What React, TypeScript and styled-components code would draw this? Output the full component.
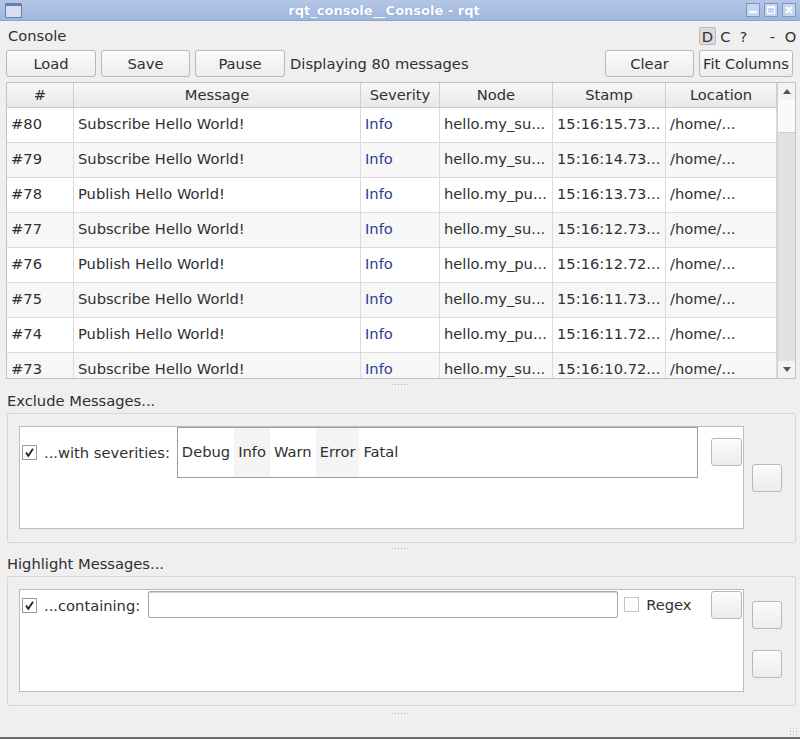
import styled, { createGlobalStyle } from "styled-components";

const GlobalStyle = createGlobalStyle`
  html, body {
    margin: 0;
    padding: 0;
    background: #efefef;
  }
  body {
    font-family: "DejaVu Sans", "Liberation Sans", sans-serif;
    font-size: 14.7px;
    color: #303030;
  }
`;

const Window = styled.div`
  width: 800px;
  height: 739px;
  display: flex;
  flex-direction: column;
  background: #efefef;
  border-bottom: 2px solid #6d6d6d;
  box-sizing: border-box;
  overflow: hidden;
`;

const TitleBar = styled.div`
  height: 20px;
  flex: none;
  display: flex;
  align-items: center;
  justify-content: space-between;
  padding: 0 4px 0 5px;
  background: linear-gradient(#b3c6e6, #9fb6dd);
  border-bottom: 1px solid #8ea3c8;
`;

const TitleText = styled.div`
  color: #ffffff;
  font-weight: bold;
  font-size: 13px;
  text-shadow: 0 0 1px #6f86b0;
`;

const WinIcon = styled.div`
  width: 15px;
  height: 11px;
  border: 1px solid #6a7fae;
  border-top-width: 3px;
  background: #d7def0;
  border-radius: 1px;
`;

const WinButtons = styled.div`
  display: flex;
  gap: 4px;
`;

const WinButton = styled.div`
  width: 14px;
  height: 14px;
  background: #c7d5ee;
  border: 1px solid #7f96c4;
  box-sizing: border-box;
  display: flex;
  align-items: center;
  justify-content: center;
`;

const Body = styled.div`
  flex: 1;
  display: flex;
  flex-direction: column;
  padding: 0 4px 0 6px;
`;

const PluginHeader = styled.div`
  height: 29px;
  display: flex;
  align-items: center;
  justify-content: space-between;
  padding-left: 2px;
`;

const PluginTools = styled.div`
  display: flex;
  align-items: center;
  margin-right: -4px;
`;

const ToolGlyph = styled.span<{ $boxed?: boolean; $wide?: number }>`
  display: inline-block;
  width: ${(p) => p.$wide ?? 17}px;
  height: 18px;
  line-height: 18px;
  text-align: center;
  box-sizing: border-box;
  border: 1px solid ${(p) => (p.$boxed ? "#b9b9b9" : "transparent")};
  background: ${(p) => (p.$boxed ? "#dcdcdc" : "transparent")};
  border-radius: 2px;
  margin-right: 1px;
`;

const ButtonRow = styled.div`
  height: 27px;
  display: flex;
  align-items: center;
  gap: 5px;
  padding-right: 3px;
`;

const Button = styled.button<{ $w?: number; $h?: number }>`
  width: ${(p) => p.$w ?? 90}px;
  height: ${(p) => p.$h ?? 27}px;
  flex: none;
  padding: 0;
  font-family: inherit;
  font-size: 14.7px;
  color: #303030;
  background: linear-gradient(#fbfbfb, #ececec);
  border: 1px solid #b8b8b8;
  border-radius: 3px;
  box-shadow: inset 0 1px 0 #ffffff;
`;

const Status = styled.span`
  flex: 1;
`;

const Table = styled.div`
  margin-top: 5px;
  height: 297px;
  border: 1px solid #c2c2c2;
  display: flex;
  background: #ffffff;
  overflow: hidden;
  box-sizing: border-box;
`;

const TableMain = styled.div`
  flex: 1;
  display: flex;
  flex-direction: column;
  overflow: hidden;
`;

const cols = "67px 287px 79px 113px 113px 1fr";

const HeaderRow = styled.div`
  display: grid;
  grid-template-columns: ${cols};
  height: 24px;
  flex: none;
  background: linear-gradient(#f7f7f7, #e9e9e9);
  border-bottom: 1px solid #c9c9c9;
`;

const HeaderCell = styled.div`
  display: flex;
  align-items: center;
  justify-content: center;
  padding-bottom: 1px;
  border-right: 1px solid #cfcfcf;
`;

const Row = styled.div<{ $alt: boolean }>`
  display: grid;
  grid-template-columns: ${cols};
  height: 35px;
  flex: none;
  background: ${(p) => (p.$alt ? "#f7f7f7" : "#ffffff")};
  border-bottom: 1px solid #dadada;
  box-sizing: border-box;
`;

const Cell = styled.div<{ $info?: boolean }>`
  display: flex;
  align-items: center;
  padding: 0 0 3px 4px;
  border-right: 1px solid #dadada;
  white-space: nowrap;
  overflow: hidden;
  color: ${(p) => (p.$info ? "#2c3d94" : "#303030")};
`;

const ScrollBar = styled.div`
  width: 17px;
  flex: none;
  display: flex;
  flex-direction: column;
  background: #e2e2e2;
  border-left: 1px solid #cfcfcf;
`;

const ScrollArrow = styled.div`
  height: 17px;
  flex: none;
  background: #f3f3f3;
  display: flex;
  align-items: center;
  justify-content: center;
`;

const ScrollThumb = styled.div`
  height: 32px;
  flex: none;
  background: #fafafa;
  border-bottom: 1px solid #cfcfcf;
`;

const ScrollTrack = styled.div`
  flex: 1;
`;

const Splitter = styled.div<{ $h: number }>`
  height: ${(p) => p.$h}px;
  flex: none;
  display: flex;
  justify-content: center;
  align-items: center;
`;

const Dots = styled.div`
  width: 18px;
  height: 1px;
  background-image: linear-gradient(90deg, #b5b5b5 50%, transparent 50%);
  background-size: 3px 1px;
`;

const SectionLabel = styled.div`
  height: 21px;
  display: flex;
  align-items: center;
  padding-left: 1px;
`;

const GroupBox = styled.div`
  margin-top: 2px;
  height: 130px;
  box-sizing: border-box;
  border: 1px solid #d6d6d6;
  border-radius: 2px;
  margin-left: 1px;
  display: flex;
  padding: 12px 14px 13px 11px;
  gap: 8px;
`;

const FilterList = styled.div`
  width: 725px;
  flex: none;
  background: #ffffff;
  border: 1px solid #bdbdbd;
  box-sizing: border-box;
  display: flex;
  flex-direction: column;
`;

const FilterRow = styled.div<{ $top?: number }>`
  display: flex;
  align-items: flex-start;
  padding-left: 2px;
  padding-top: ${(p) => p.$top ?? 0}px;
`;

const CheckLabel = styled.div<{ $top: number }>`
  display: flex;
  align-items: center;
  gap: 7px;
  margin-top: ${(p) => p.$top}px;
  white-space: nowrap;
`;

const CheckBox = styled.div<{ $checked?: boolean }>`
  width: 13px;
  height: 13px;
  border: 1px solid ${(p) => (p.$checked ? "#9a9a9a" : "#c4c4c4")};
  background: #ffffff;
  display: flex;
  align-items: center;
  justify-content: center;
  flex: none;
`;

const SeverityList = styled.div`
  margin-left: 7px;
  width: 521px;
  height: 51px;
  border: 1px solid #9d9d9d;
  box-sizing: border-box;
  display: flex;
  align-items: flex-start;
`;

const SeverityItem = styled.div<{ $alt: boolean }>`
  height: 100%;
  padding: 0 4px 2px;
  display: flex;
  align-items: center;
  box-sizing: border-box;
  background: ${(p) => (p.$alt ? "#f4f4f4" : "#ffffff")};
`;

const SmallSquare = styled(Button)<{ $mt?: number }>`
  margin-left: auto;
  margin-right: 1px;
  margin-top: ${(p) => p.$mt ?? 0}px;
`;

const SideButtons = styled.div<{ $pad: number }>`
  display: flex;
  flex-direction: column;
  gap: 21px;
  padding-top: ${(p) => p.$pad}px;
`;

const TextInput = styled.div`
  margin-left: 8px;
  width: 470px;
  height: 27px;
  box-sizing: border-box;
  background: #ffffff;
  border: 1px solid #a8a8a8;
  border-radius: 2px;
  box-shadow: inset 0 1px 1px #d0d0d0;
`;

const RegexWrap = styled.div`
  display: flex;
  align-items: center;
  gap: 7px;
  margin-left: 6px;
  height: 27px;
`;

const BottomArea = styled.div`
  flex: 1;
  display: flex;
  flex-direction: column;
  align-items: center;
  position: relative;
`;

const Grip = styled.div`
  position: absolute;
  right: -2px;
  bottom: 1px;
  width: 9px;
  height: 9px;
  background-image: radial-gradient(#bdbdbd 40%, transparent 45%);
  background-size: 3px 3px;
`;

const Check = () => (
  <svg width="11" height="11" viewBox="0 0 11 11">
    <path d="M2 5.5 L4.3 8.8 L9 1.8" stroke="#222" strokeWidth="1.8" fill="none" />
  </svg>
);

const rows = [
  [80, "Subscribe", "su", "15.73"],
  [79, "Subscribe", "su", "14.73"],
  [78, "Publish", "pu", "13.73"],
  [77, "Subscribe", "su", "12.73"],
  [76, "Publish", "pu", "12.72"],
  [75, "Subscribe", "su", "11.73"],
  [74, "Publish", "pu", "11.72"],
  [73, "Subscribe", "su", "10.72"],
] as const;

const severities = ["Debug", "Info", "Warn", "Error", "Fatal"];

export default function App() {
  return (
    <>
      <GlobalStyle />
      <Window>
        <TitleBar>
          <WinIcon />
          <TitleText>rqt_console__Console - rqt</TitleText>
          <WinButtons>
            <WinButton>
              <svg width="8" height="8" viewBox="0 0 8 8">
                <rect x="0" y="5" width="8" height="2" fill="#fff" />
              </svg>
            </WinButton>
            <WinButton>
              <svg width="8" height="8" viewBox="0 0 8 8">
                <rect x="0.5" y="0.5" width="7" height="7" fill="none" stroke="#fff" />
                <rect x="0" y="0" width="8" height="2" fill="#fff" />
              </svg>
            </WinButton>
            <WinButton>
              <svg width="8" height="8" viewBox="0 0 8 8">
                <path d="M1 1 L7 7 M7 1 L1 7" stroke="#fff" strokeWidth="2" />
              </svg>
            </WinButton>
          </WinButtons>
        </TitleBar>
        <Body>
          <PluginHeader>
            <span>Console</span>
            <PluginTools>
              <ToolGlyph $boxed>D</ToolGlyph>
              <ToolGlyph>C</ToolGlyph>
              <ToolGlyph>?</ToolGlyph>
              <ToolGlyph $wide={10} />
              <ToolGlyph>-</ToolGlyph>
              <ToolGlyph>O</ToolGlyph>
            </PluginTools>
          </PluginHeader>
          <ButtonRow>
            <Button>Load</Button>
            <Button $w={89}>Save</Button>
            <Button>Pause</Button>
            <Status>Displaying 80 messages</Status>
            <Button $w={89}>Clear</Button>
            <Button $w={94}>Fit Columns</Button>
          </ButtonRow>
          <Table>
            <TableMain>
              <HeaderRow>
                {["#", "Message", "Severity", "Node", "Stamp", "Location"].map((h) => (
                  <HeaderCell key={h}>{h}</HeaderCell>
                ))}
              </HeaderRow>
              {rows.map(([n, kind, node, stamp], i) => (
                <Row key={n} $alt={i % 2 === 1}>
                  <Cell>#{n}</Cell>
                  <Cell>{kind} Hello World!</Cell>
                  <Cell $info>Info</Cell>
                  <Cell>hello.my_{node}...</Cell>
                  <Cell>15:16:{stamp}...</Cell>
                  <Cell>/home/...</Cell>
                </Row>
              ))}
            </TableMain>
            <ScrollBar>
              <ScrollArrow>
                <svg width="8" height="5" viewBox="0 0 8 5">
                  <path d="M0 5 L4 0 L8 5 Z" fill="#555" />
                </svg>
              </ScrollArrow>
              <ScrollThumb />
              <ScrollTrack />
              <ScrollArrow>
                <svg width="8" height="5" viewBox="0 0 8 5">
                  <path d="M0 0 L4 5 L8 0 Z" fill="#555" />
                </svg>
              </ScrollArrow>
            </ScrollBar>
          </Table>
          <Splitter $h={11}>
            <Dots />
          </Splitter>
          <SectionLabel>Exclude Messages...</SectionLabel>
          <GroupBox>
            <FilterList>
              <FilterRow>
                <CheckLabel $top={17}>
                  <CheckBox $checked>
                    <Check />
                  </CheckBox>
                  <span>...with severities:</span>
                </CheckLabel>
                <SeverityList>
                  {severities.map((s, i) => (
                    <SeverityItem key={s} $alt={i % 2 === 1}>
                      {s}
                    </SeverityItem>
                  ))}
                </SeverityList>
                <SmallSquare $w={31} $h={28} $mt={11} />
              </FilterRow>
            </FilterList>
            <SideButtons $pad={38}>
              <Button $w={30} $h={28} />
            </SideButtons>
          </GroupBox>
          <Splitter $h={10}>
            <Dots />
          </Splitter>
          <SectionLabel>Highlight Messages...</SectionLabel>
          <GroupBox>
            <FilterList>
              <FilterRow $top={1}>
                <CheckLabel $top={6}>
                  <CheckBox $checked>
                    <Check />
                  </CheckBox>
                  <span>...containing:</span>
                </CheckLabel>
                <TextInput />
                <RegexWrap>
                  <CheckBox />
                  <span>Regex</span>
                </RegexWrap>
                <SmallSquare $w={31} $h={28} />
              </FilterRow>
            </FilterList>
            <SideButtons $pad={12}>
              <Button $w={30} $h={28} />
              <Button $w={30} $h={28} />
            </SideButtons>
          </GroupBox>
          <BottomArea>
            <Splitter $h={14}>
              <Dots />
            </Splitter>
            <Grip />
          </BottomArea>
        </Body>
      </Window>
    </>
  );
}
